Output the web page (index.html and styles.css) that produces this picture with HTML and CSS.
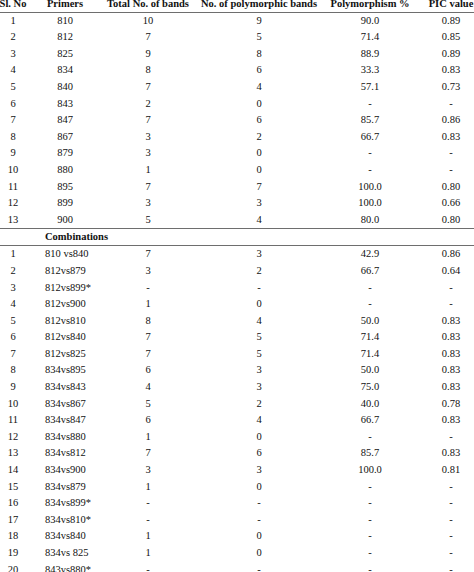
FILE: index.html
```html
<!DOCTYPE html>
<html>
<head>
<meta charset="utf-8">
<link rel="stylesheet" href="styles.css">
</head>
<body>
<div class="wrap">
<table class="data">
<colgroup>
<col class="c1"><col class="c2"><col class="c3"><col class="c4"><col class="c5"><col class="c6">
</colgroup>
<thead>
<tr class="head"><th>Sl. No</th><th>Primers</th><th>Total No. of bands</th><th>No. of polymorphic bands</th><th>Polymorphism %</th><th>PIC value</th></tr>
</thead>
<tbody>
<tr><td>1</td><td>810</td><td>10</td><td>9</td><td>90.0</td><td>0.89</td></tr>
<tr><td>2</td><td>812</td><td>7</td><td>5</td><td>71.4</td><td>0.85</td></tr>
<tr><td>3</td><td>825</td><td>9</td><td>8</td><td>88.9</td><td>0.89</td></tr>
<tr><td>4</td><td>834</td><td>8</td><td>6</td><td>33.3</td><td>0.83</td></tr>
<tr><td>5</td><td>840</td><td>7</td><td>4</td><td>57.1</td><td>0.73</td></tr>
<tr><td>6</td><td>843</td><td>2</td><td>0</td><td>-</td><td>-</td></tr>
<tr><td>7</td><td>847</td><td>7</td><td>6</td><td>85.7</td><td>0.86</td></tr>
<tr><td>8</td><td>867</td><td>3</td><td>2</td><td>66.7</td><td>0.83</td></tr>
<tr><td>9</td><td>879</td><td>3</td><td>0</td><td>-</td><td>-</td></tr>
<tr><td>10</td><td>880</td><td>1</td><td>0</td><td>-</td><td>-</td></tr>
<tr><td>11</td><td>895</td><td>7</td><td>7</td><td>100.0</td><td>0.80</td></tr>
<tr><td>12</td><td>899</td><td>3</td><td>3</td><td>100.0</td><td>0.66</td></tr>
<tr class="last"><td>13</td><td>900</td><td>5</td><td>4</td><td>80.0</td><td>0.80</td></tr>
<tr class="section"><td></td><td colspan="5" class="sect-title">Combinations</td></tr>
<tr class="combo"><td>1</td><td>810 vs840</td><td>7</td><td>3</td><td>42.9</td><td>0.86</td></tr>
<tr class="combo"><td>2</td><td>812vs879</td><td>3</td><td>2</td><td>66.7</td><td>0.64</td></tr>
<tr class="combo"><td>3</td><td>812vs899*</td><td>-</td><td>-</td><td>-</td><td>-</td></tr>
<tr class="combo"><td>4</td><td>812vs900</td><td>1</td><td>0</td><td>-</td><td>-</td></tr>
<tr class="combo"><td>5</td><td>812vs810</td><td>8</td><td>4</td><td>50.0</td><td>0.83</td></tr>
<tr class="combo"><td>6</td><td>812vs840</td><td>7</td><td>5</td><td>71.4</td><td>0.83</td></tr>
<tr class="combo"><td>7</td><td>812vs825</td><td>7</td><td>5</td><td>71.4</td><td>0.83</td></tr>
<tr class="combo"><td>8</td><td>834vs895</td><td>6</td><td>3</td><td>50.0</td><td>0.83</td></tr>
<tr class="combo"><td>9</td><td>834vs843</td><td>4</td><td>3</td><td>75.0</td><td>0.83</td></tr>
<tr class="combo"><td>10</td><td>834vs867</td><td>5</td><td>2</td><td>40.0</td><td>0.78</td></tr>
<tr class="combo"><td>11</td><td>834vs847</td><td>6</td><td>4</td><td>66.7</td><td>0.83</td></tr>
<tr class="combo"><td>12</td><td>834vs880</td><td>1</td><td>0</td><td>-</td><td>-</td></tr>
<tr class="combo"><td>13</td><td>834vs812</td><td>7</td><td>6</td><td>85.7</td><td>0.83</td></tr>
<tr class="combo"><td>14</td><td>834vs900</td><td>3</td><td>3</td><td>100.0</td><td>0.81</td></tr>
<tr class="combo"><td>15</td><td>834vs879</td><td>1</td><td>0</td><td>-</td><td>-</td></tr>
<tr class="combo"><td>16</td><td>834vs899*</td><td>-</td><td>-</td><td>-</td><td>-</td></tr>
<tr class="combo"><td>17</td><td>834vs810*</td><td>-</td><td>-</td><td>-</td><td>-</td></tr>
<tr class="combo"><td>18</td><td>834vs840</td><td>1</td><td>0</td><td>-</td><td>-</td></tr>
<tr class="combo"><td>19</td><td>834vs 825</td><td>1</td><td>0</td><td>-</td><td>-</td></tr>
<tr class="combo"><td>20</td><td>843vs880*</td><td>-</td><td>-</td><td>-</td><td>-</td></tr>
</tbody>
</table>
</div>
</body>
</html>
```
FILE: styles.css
```css
html, body {
  margin: 0;
  padding: 0;
  background: #ffffff;
  overflow: hidden;
}

.wrap {
  margin: -4px 0 0 -5px;
}

.data {
  width: 488px;
  table-layout: fixed;
  border-collapse: collapse;
  font-family: "Liberation Serif", "Times New Roman", serif;
  font-size: 10.5px;
  color: #111111;
}

.c1 { width: 36px; }
.c2 { width: 68px; }
.c3 { width: 98px; }
.c4 { width: 124px; }
.c5 { width: 98px; }
.c6 { width: 64px; }

.data th,
.data td {
  padding: 0;
  height: 16.6px;
  line-height: 16.6px;
  text-align: center;
  white-space: nowrap;
  overflow: visible;
}

.data th {
  font-weight: bold;
  height: 15.6px;
  line-height: 15.6px;
}

.head th {
  border-bottom: 1.5px solid #6e6e6e;
}

.last td {
  border-bottom: 1.5px solid #6e6e6e;
}

.section td {
  height: 16px;
  line-height: 16px;
  border-bottom: 1.5px solid #6e6e6e;
}

.sect-title {
  font-weight: bold;
  text-align: left !important;
  padding-left: 14px !important;
}

.combo td:nth-child(2) {
  text-align: left;
  padding-left: 14px;
}
```
